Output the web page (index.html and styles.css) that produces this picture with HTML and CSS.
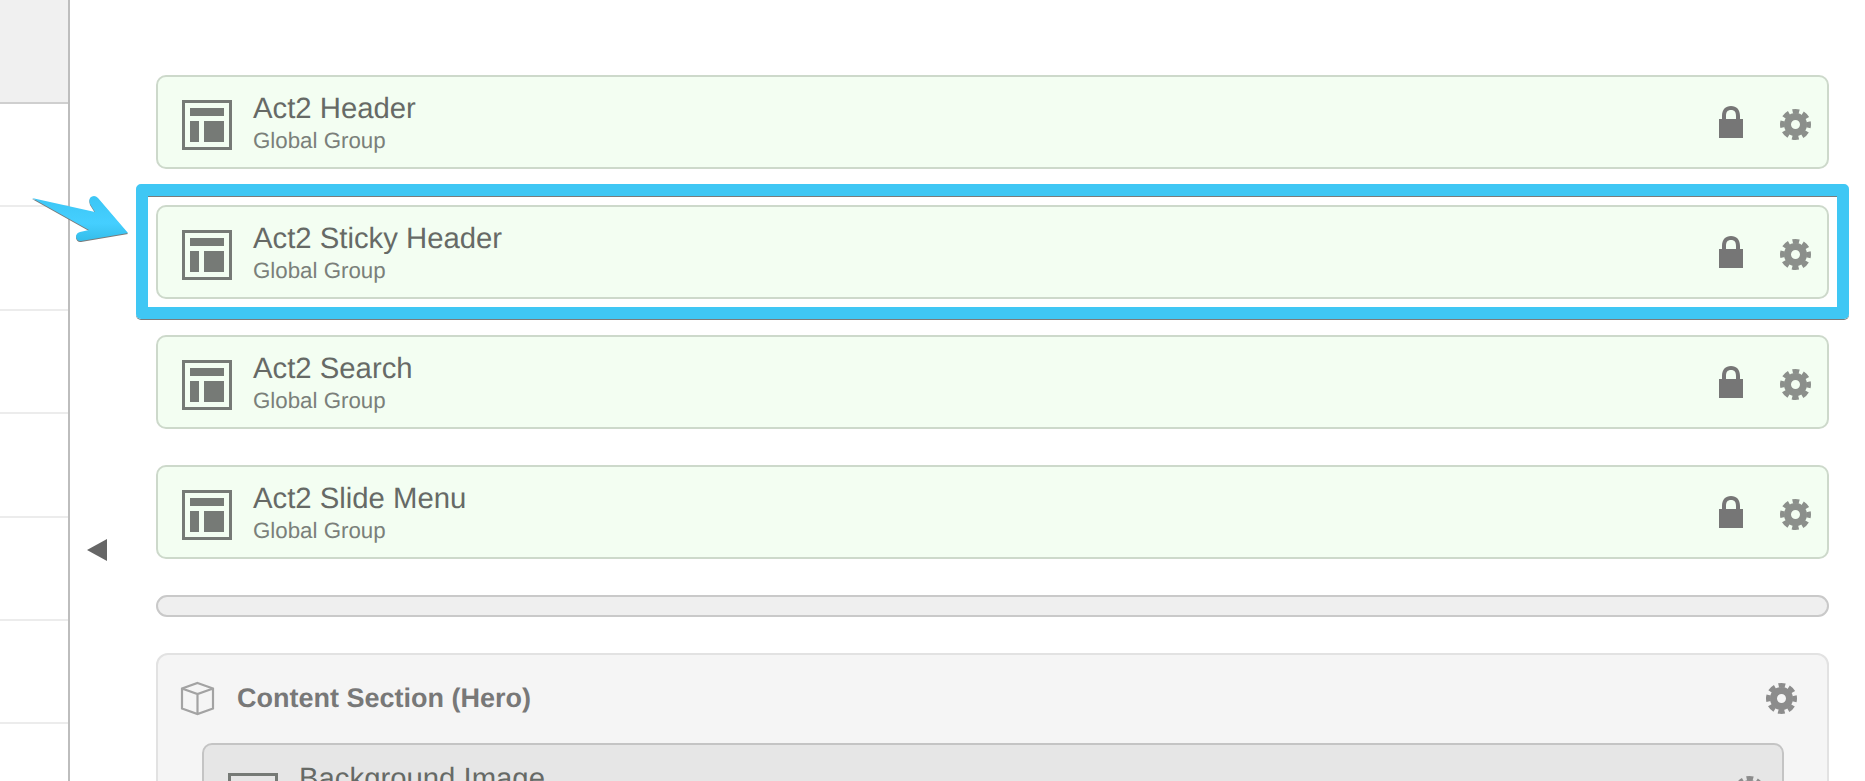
FILE: index.html
```html
<!DOCTYPE html>
<html lang="en">
<head>
  <meta charset="UTF-8">
  <meta name="viewport" content="width=device-width, initial-scale=1.0">
  <title>Layout Structure</title>
  <link rel="stylesheet" href="styles.css">
</head>
<body>
  <svg class="defs" width="0" height="0">
    <symbol id="ico-layout" viewBox="0 0 50 50">
      <path d="M0 0H50V50H0Z M3 3V47H47V3Z" fill-rule="evenodd"/>
      <rect x="8" y="8" width="34" height="8"/>
      <rect x="8" y="21" width="9" height="21"/>
      <rect x="22" y="21" width="20" height="21"/>
    </symbol>
    <symbol id="ico-lock" viewBox="0 0 24 32">
      <path d="M0 13H3V10C3 3.500 6.500 0 12 0S21 3.500 21 10V13H24V32H0Z M7 13H17V10C17 6 15.500 4 12 4S7 6 7 10Z" fill-rule="evenodd"/>
    </symbol>
    <symbol id="ico-gear" viewBox="0 0 31 31">
      <circle cx="15.500" cy="15.500" r="8" fill="none" stroke="currentColor" stroke-width="7"/>
      <circle cx="15.500" cy="15.500" r="13.250" fill="none" stroke="currentColor" stroke-width="4.500" stroke-dasharray="6.600 3.800" stroke-dashoffset="3.300"/>
    </symbol>
  </svg>

  <div class="page">
    <aside class="sidebar">
      <div class="side-head"></div>
      <div class="side-row"></div>
      <div class="side-row"></div>
      <div class="side-row"></div>
      <div class="side-row"></div>
      <div class="side-row"></div>
      <div class="side-row"></div>
      <div class="side-row"></div>
    </aside>

    <main class="main">
      <div class="collapse"></div>

      <div class="card">
        <svg class="ico-layout"><use href="#ico-layout"/></svg>
        <div class="card-text">
          <div class="card-title">Act2 Header</div>
          <div class="card-sub">Global Group</div>
        </div>
        <svg class="ico-lock"><use href="#ico-lock"/></svg>
        <svg class="ico-gear"><use href="#ico-gear"/></svg>
      </div>

      <div class="card">
        <div class="highlight"></div>
        <svg class="ico-layout"><use href="#ico-layout"/></svg>
        <div class="card-text">
          <div class="card-title">Act2 Sticky Header</div>
          <div class="card-sub">Global Group</div>
        </div>
        <svg class="ico-lock"><use href="#ico-lock"/></svg>
        <svg class="ico-gear"><use href="#ico-gear"/></svg>
      </div>

      <div class="card">
        <svg class="ico-layout"><use href="#ico-layout"/></svg>
        <div class="card-text">
          <div class="card-title">Act2 Search</div>
          <div class="card-sub">Global Group</div>
        </div>
        <svg class="ico-lock"><use href="#ico-lock"/></svg>
        <svg class="ico-gear"><use href="#ico-gear"/></svg>
      </div>

      <div class="card">
        <svg class="ico-layout"><use href="#ico-layout"/></svg>
        <div class="card-text">
          <div class="card-title">Act2 Slide Menu</div>
          <div class="card-sub">Global Group</div>
        </div>
        <svg class="ico-lock"><use href="#ico-lock"/></svg>
        <svg class="ico-gear"><use href="#ico-gear"/></svg>
      </div>

      <div class="drop-bar"></div>

      <section class="section">
        <div class="section-head">
          <svg class="ico-box" viewBox="0 0 35 35">
            <path d="M17.500 2L33 7.500V27.500L17.500 33L2 27.500V7.500Z M2 7.500L17.500 13L33 7.500 M17.500 13V33" fill="none" stroke="currentColor" stroke-width="2.200"/>
          </svg>
          <div class="section-title">Content Section (Hero)</div>
          <svg class="ico-gear"><use href="#ico-gear"/></svg>
        </div>
        <div class="card card-inner">
          <svg class="ico-layout"><use href="#ico-layout"/></svg>
          <div class="card-text">
            <div class="card-title">Background Image</div>
          </div>
          <svg class="ico-gear"><use href="#ico-gear"/></svg>
        </div>
      </section>
    </main>
  </div>

  <!-- annotation arrow pointing at the highlighted row -->
  <svg class="arrow" width="1865" height="781">
    <defs>
      <linearGradient id="arrow-fill" x1="0" y1="0" x2="0" y2="1">
        <stop offset="0" stop-color="#3cc6f5"/>
        <stop offset="0.6" stop-color="#45cfff"/>
        <stop offset="1" stop-color="#34bdea"/>
      </linearGradient>
    </defs>
    <path d="M32 198L95 212L90 204Q88 198 92 196.500Q95 195 98 198L128 233L81 241Q77 241.500 76 237Q76 233 80 232L89 230Z" fill="#7a7a7a" transform="translate(0 1)"/>
    <path d="M32 198L95 212L90 204Q88 198 92 196.500Q95 195 98 198L128 233L81 241Q77 241.500 76 237Q76 233 80 232L89 230Z" fill="url(#arrow-fill)"/>
  </svg>
</body>
</html>
```

FILE: styles.css
```css
html, body {
  margin: 0;
  height: 781px;
  overflow: hidden;
  background: #fff;
  font-family: 'Liberation Sans', Arial, sans-serif;
  text-rendering: geometricPrecision;
}
.defs {
  position: absolute;
}
.page {
  display: flex;
  height: 781px;
  overflow: hidden;
}

/* left column */
.sidebar {
  width: 68px;
  flex: none;
  border-right: 2px solid #bdbdbd;
}
.side-head {
  height: 102px;
  background: #f0f0f0;
  border-bottom: 2px solid #cfcfcf;
}
.side-row {
  height: 101.400px;
  border-bottom: 2px solid #ececec;
}

/* main column */
.main {
  position: relative;
  flex: 1;
  padding: 75px 36px 0 86px;
}
.collapse {
  position: absolute;
  left: 17px;
  top: 539px;
  width: 0;
  height: 0;
  border-top: 11px solid transparent;
  border-bottom: 11px solid transparent;
  border-right: 20px solid #666;
}

.card {
  position: relative;
  display: flex;
  align-items: center;
  box-sizing: border-box;
  height: 94px;
  margin-bottom: 36px;
  padding: 0 16px 0 24px;
  background: #f3fef2;
  border: 2px solid #cdd9cb;
  border-radius: 10px;
}
.highlight {
  position: absolute;
  top: -23px;
  left: -22px;
  right: -22px;
  bottom: -22px;
  border: 12px solid #3fc7f4;
  border-radius: 5px;
  box-shadow: 0 1px 0 #7b7b7b, inset 0 1px 0 #7b7b7b;
  pointer-events: none;
}
.card-text {
  flex: 1;
  margin-left: 21px;
  padding-top: 3.500px;
}
.card-title {
  font-size: 29.300px;
  line-height: 32px;
  color: #666a66;
}
.card-sub {
  margin-top: 1.500px;
  font-size: 22.300px;
  line-height: 28px;
  color: #7a807a;
}

.ico-layout {
  width: 50px;
  height: 50px;
  flex: none;
  margin-top: 5px;
  fill: #767a76;
}
.ico-lock {
  width: 24px;
  height: 32px;
  flex: none;
  margin-right: 37px;
  fill: #767676;
}
.ico-gear {
  width: 31px;
  height: 31px;
  flex: none;
  margin-top: 4px;
  color: #8b8f8b;
}

.drop-bar {
  box-sizing: border-box;
  height: 22px;
  margin: 2px 0 36px;
  background: #efefef;
  border: 2px solid #c9c9c9;
  border-radius: 11px;
}

.section {
  box-sizing: border-box;
  height: 300px;
  padding: 0 43px 0 44px;
  background: #f5f5f5;
  border: 2px solid #e2e2e2;
  border-radius: 12px;
}
.section-head {
  display: flex;
  align-items: center;
  height: 86px;
  margin: 0 -13px 2px -22px;
}
.ico-box {
  width: 35px;
  height: 35px;
  flex: none;
  color: #a3a3a3;
}
.section-title {
  flex: 1;
  margin-left: 22px;
  font-size: 27px;
  font-weight: bold;
  color: #787878;
}
.section .ico-gear {
  margin-top: 0;
  color: #8c8c8c;
}

.card-inner {
  height: 120px;
  align-items: flex-start;
  padding: 28px 17px 0 24px;
  background: #e6e6e6;
  border-color: #c4c4c4;
}
.card-inner .ico-layout {
  margin-top: 0;
}
.card-inner .card-text {
  margin-top: -14px;
}
.card-inner .ico-gear {
  margin-top: 3px;
}

/* annotation */
.arrow {
  position: absolute;
  top: 0;
  left: 0;
  pointer-events: none;
}
```
